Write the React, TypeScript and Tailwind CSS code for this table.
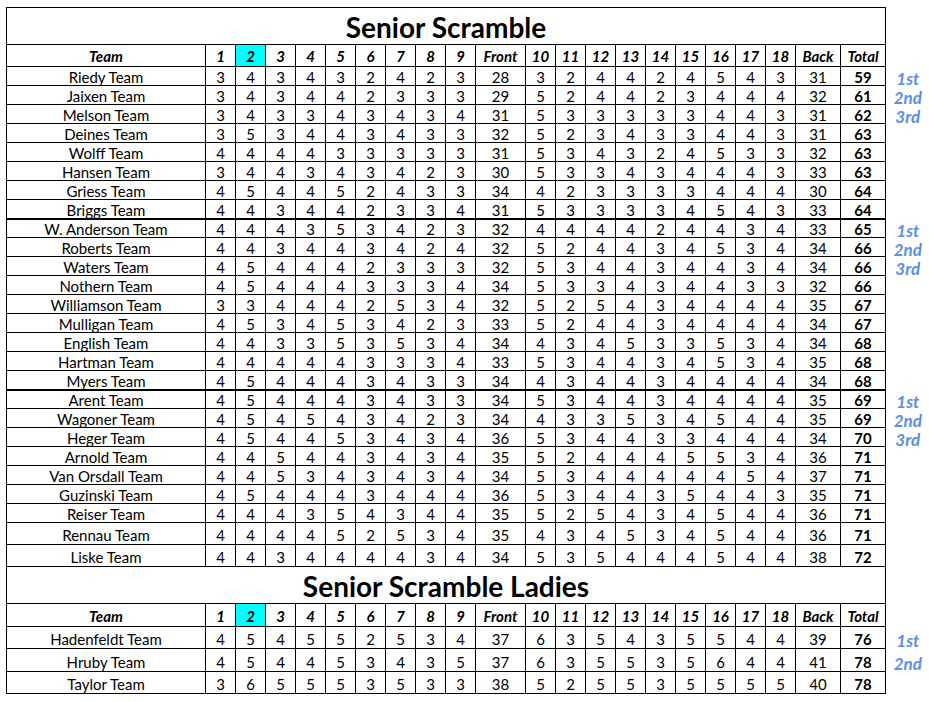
import React from "react";

type Row = { name: string; front9: number[]; front: number; back9: number[]; back: number; total: number; place?: string; thick?: boolean; h?: string };

const senior: Row[] = [
  { name: "Riedy Team", front9: [3,4,3,4,3,2,4,2,3], front: 28, back9: [3,2,4,4,2,4,5,4,3], back: 31, total: 59, place: "1st" },
  { name: "Jaixen Team", front9: [3,4,3,4,4,2,3,3,3], front: 29, back9: [5,2,4,4,2,3,4,4,4], back: 32, total: 61, place: "2nd" },
  { name: "Melson Team", front9: [3,4,3,3,4,3,4,3,4], front: 31, back9: [5,3,3,3,3,3,4,4,3], back: 31, total: 62, place: "3rd" },
  { name: "Deines Team", front9: [3,5,3,4,4,3,4,3,3], front: 32, back9: [5,2,3,4,3,3,4,4,3], back: 31, total: 63 },
  { name: "Wolff Team", front9: [4,4,4,4,3,3,3,3,3], front: 31, back9: [5,3,4,3,2,4,5,3,3], back: 32, total: 63 },
  { name: "Hansen Team", front9: [3,4,4,3,4,3,4,2,3], front: 30, back9: [5,3,3,4,3,4,4,4,3], back: 33, total: 63 },
  { name: "Griess Team", front9: [4,5,4,4,5,2,4,3,3], front: 34, back9: [4,2,3,3,3,3,4,4,4], back: 30, total: 64 },
  { name: "Briggs Team", front9: [4,4,3,4,4,2,3,3,4], front: 31, back9: [5,3,3,3,3,4,5,4,3], back: 33, total: 64, thick: true },
  { name: "W. Anderson Team", front9: [4,4,4,3,5,3,4,2,3], front: 32, back9: [4,4,4,4,2,4,4,3,4], back: 33, total: 65, place: "1st" },
  { name: "Roberts Team", front9: [4,4,3,4,4,3,4,2,4], front: 32, back9: [5,2,4,4,3,4,5,3,4], back: 34, total: 66, place: "2nd" },
  { name: "Waters Team", front9: [4,5,4,4,4,2,3,3,3], front: 32, back9: [5,3,4,4,3,4,4,3,4], back: 34, total: 66, place: "3rd" },
  { name: "Nothern Team", front9: [4,5,4,4,4,3,3,3,4], front: 34, back9: [5,3,3,4,3,4,4,3,3], back: 32, total: 66 },
  { name: "Williamson Team", front9: [3,3,4,4,4,2,5,3,4], front: 32, back9: [5,2,5,4,3,4,4,4,4], back: 35, total: 67 },
  { name: "Mulligan Team", front9: [4,5,3,4,5,3,4,2,3], front: 33, back9: [5,2,4,4,3,4,4,4,4], back: 34, total: 67 },
  { name: "English Team", front9: [4,4,3,3,5,3,5,3,4], front: 34, back9: [4,3,4,5,3,3,5,3,4], back: 34, total: 68 },
  { name: "Hartman Team", front9: [4,4,4,4,4,3,3,3,4], front: 33, back9: [5,3,4,4,3,4,5,3,4], back: 35, total: 68 },
  { name: "Myers Team", front9: [4,5,4,4,4,3,4,3,3], front: 34, back9: [4,3,4,4,3,4,4,4,4], back: 34, total: 68, thick: true },
  { name: "Arent Team", front9: [4,5,4,4,4,3,4,3,3], front: 34, back9: [5,3,4,4,3,4,4,4,4], back: 35, total: 69, place: "1st" },
  { name: "Wagoner Team", front9: [4,5,4,5,4,3,4,2,3], front: 34, back9: [4,3,3,5,3,4,5,4,4], back: 35, total: 69, place: "2nd" },
  { name: "Heger Team", front9: [4,5,4,4,5,3,4,3,4], front: 36, back9: [5,3,4,4,3,3,4,4,4], back: 34, total: 70, place: "3rd" },
  { name: "Arnold Team", front9: [4,4,5,4,4,3,4,3,4], front: 35, back9: [5,2,4,4,4,5,5,3,4], back: 36, total: 71 },
  { name: "Van Orsdall Team", front9: [4,4,5,3,4,3,4,3,4], front: 34, back9: [5,3,4,4,4,4,4,5,4], back: 37, total: 71 },
  { name: "Guzinski Team", front9: [4,5,4,4,4,3,4,4,4], front: 36, back9: [5,3,4,4,3,5,4,4,3], back: 35, total: 71 },
  { name: "Reiser Team", front9: [4,4,4,3,5,4,3,4,4], front: 35, back9: [5,2,5,4,3,4,5,4,4], back: 36, total: 71 },
  { name: "Rennau Team", front9: [4,4,4,4,5,2,5,3,4], front: 35, back9: [4,3,4,5,3,4,5,4,4], back: 36, total: 71, h: "h-[22px]" },
  { name: "Liske Team", front9: [4,4,3,4,4,4,4,3,4], front: 34, back9: [5,3,5,4,4,4,5,4,4], back: 38, total: 72, h: "h-[22px]" },
];

const ladies: Row[] = [
  { name: "Hadenfeldt Team", front9: [4,5,4,5,5,2,5,3,4], front: 37, back9: [6,3,5,4,3,5,5,4,4], back: 39, total: 76, place: "1st", h: "h-[22px]" },
  { name: "Hruby Team", front9: [4,5,4,4,5,3,4,3,5], front: 37, back9: [6,3,5,5,3,5,6,4,4], back: 41, total: 78, place: "2nd", h: "h-[23px]" },
  { name: "Taylor Team", front9: [3,6,5,5,5,3,5,3,3], front: 38, back9: [5,2,5,5,3,5,5,5,5], back: 40, total: 78, h: "h-[22px]" },
];

const cell = "border border-black p-0 text-center align-bottom";

function Header({ tall }: { tall?: boolean }) {
  const holes1 = ["1", "2", "3", "4", "5", "6", "7", "8", "9"];
  const holes2 = ["10", "11", "12", "13", "14", "15", "16", "17", "18"];
  const hc = `${cell} leading-[17px] font-bold italic pb-[1px]`;
  return (
    <tr className={tall ? "h-[23px]" : "h-[22px]"}>
      <td className={hc}>Team</td>
      {holes1.map((h) => (
        <td key={h} className={`${hc} ${h === "2" ? "bg-[#00ffff]" : ""}`}>{h}</td>
      ))}
      <td className={hc}>Front</td>
      {holes2.map((h) => (
        <td key={h} className={hc}>{h}</td>
      ))}
      <td className={hc}>Back</td>
      <td className={hc}>Total</td>
      <td className="p-0"></td>
    </tr>
  );
}

function DataRow({ r }: { r: Row }) {
  const b = r.thick ? "border-b-2" : "";
  const txt = r.h ? "leading-[17px] pb-0" : "leading-[15px] pb-0";
  const c = `${cell} ${b} ${txt}`;
  return (
    <tr className={r.h ?? "h-[19px]"}>
      <td className={c}>{r.name}</td>
      {r.front9.map((v, i) => (
        <td key={"f" + i} className={c}>{v}</td>
      ))}
      <td className={c}>{r.front}</td>
      {r.back9.map((v, i) => (
        <td key={"b" + i} className={c}>{v}</td>
      ))}
      <td className={c}>{r.back}</td>
      <td className={`${c} font-bold`}>{r.total}</td>
      <td className={`p-0 text-center align-bottom ${r.h ? "leading-[17px]" : "leading-[14px]"} font-bold italic text-[17px] text-[#5b8ee9]`}>
        {r.place ?? ""}
      </td>
    </tr>
  );
}

function Title({ text }: { text: string }) {
  return (
    <tr className="h-[37px]">
      <td colSpan={22} className="border border-black p-0 text-center align-bottom font-bold text-[28px] leading-[32px] pb-[1px]">
        {text}
      </td>
      <td className="p-0"></td>
    </tr>
  );
}

export default function App() {
  return (
    <div className="w-[929px] h-[702px] bg-white text-black pl-[6px] pt-[7px] overflow-hidden" style={{ fontFamily: "Lato, 'Liberation Sans', sans-serif" }}>
      <table className="table-fixed border-collapse w-[923px] text-[15px]">
        <colgroup>
          <col className="w-[199px]" />
          {Array.from({ length: 9 }).map((_, i) => (
            <col key={"a" + i} className="w-[30px]" />
          ))}
          <col className="w-[50px]" />
          {Array.from({ length: 9 }).map((_, i) => (
            <col key={"b" + i} className="w-[30px]" />
          ))}
          <col className="w-[45px]" />
          <col className="w-[45px]" />
          <col className="w-[44px]" />
        </colgroup>
        <tbody>
          <Title text="Senior Scramble" />
          <Header />
          {senior.map((r) => (
            <DataRow key={r.name} r={r} />
          ))}
          <Title text="Senior Scramble Ladies" />
          <Header tall />
          {ladies.map((r) => (
            <DataRow key={r.name} r={r} />
          ))}
        </tbody>
      </table>
    </div>
  );
}
